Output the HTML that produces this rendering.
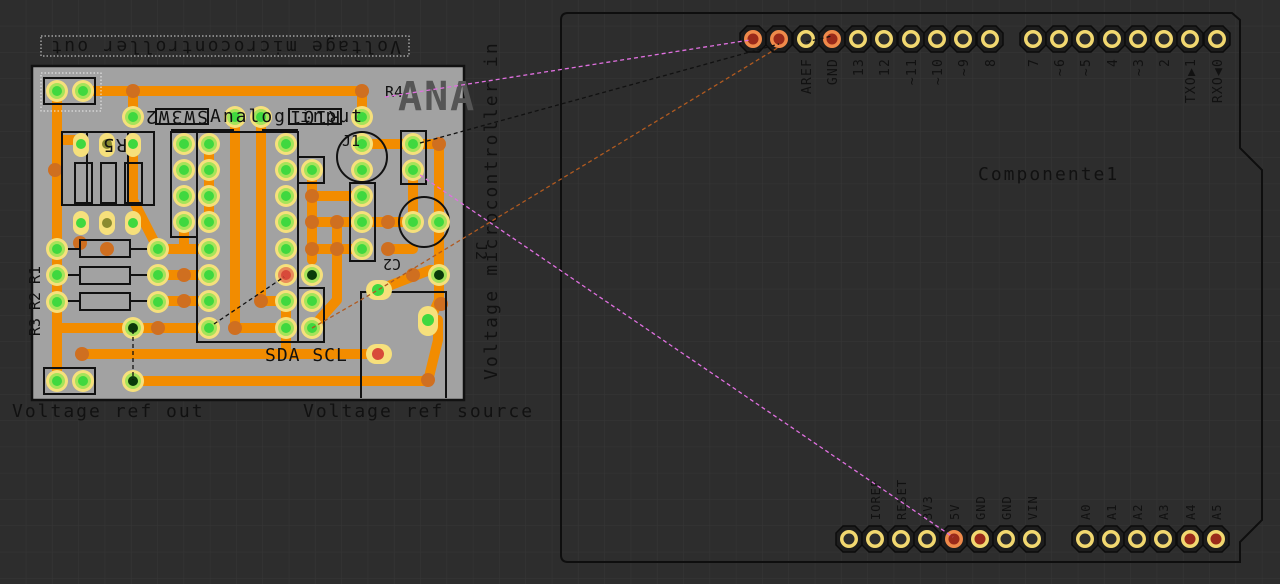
<!DOCTYPE html>
<html><head><meta charset="utf-8"><style>
html,body{margin:0;padding:0;background:#2d2d2d;width:1280px;height:584px;overflow:hidden}
svg{display:block}
text{font-family:"DejaVu Sans Mono","Liberation Mono",monospace}
</style></head><body>
<svg width="1280" height="584" viewBox="0 0 1280 584" xmlns="http://www.w3.org/2000/svg">
<defs>
<pattern id="g" width="26.3" height="26.3" patternUnits="userSpaceOnUse" x="0" y="0">
<path d="M26.3 0V26.3H0" fill="none" stroke="#363636" stroke-width="1"/>
</pattern>
<g id="p"><circle r="11" fill="#f6e07c"/><circle r="8" fill="#a6e35a"/><circle r="5" fill="#3fd83f"/></g>
<g id="pd"><circle r="11" fill="#f6e07c"/><circle r="8" fill="#a6e35a"/><circle r="5" fill="#0a3a0a"/></g>
<g id="pr"><circle r="11" fill="#f6e07c"/><circle r="8" fill="#e88a5a"/><circle r="5" fill="#d84a3a"/></g>
<g id="h"><polygon points="-6,-13 6,-13 13,-6 13,6 6,13 -6,13 -13,6 -13,-6" fill="#1d1d1d" stroke="#0c0c0c" stroke-width="1.5"/><circle r="9" fill="#f2d870"/><circle r="5.5" fill="#2d2d2d"/></g>
<g id="hr"><polygon points="-6,-13 6,-13 13,-6 13,6 6,13 -6,13 -13,6 -13,-6" fill="#1d1d1d" stroke="#0c0c0c" stroke-width="1.5"/><circle r="9" fill="#f08a4a"/><circle r="5.5" fill="#9a2a1a"/></g>
<g id="hc"><polygon points="-6,-13 6,-13 13,-6 13,6 6,13 -6,13 -13,6 -13,-6" fill="#1d1d1d" stroke="#0c0c0c" stroke-width="1.5"/><circle r="9" fill="#f2d870"/><circle r="5.5" fill="#9a2a1a"/></g>
</defs>
<rect width="1280" height="584" fill="url(#g)"/>

<path d="M568 13 H1232 L1240 20 V148 L1262 170 V520 L1240 542 V562 H568 Q561 562 561 555 V20 Q561 13 568 13 Z" fill="none" stroke="#0e0e0e" stroke-width="2"/>
<text x="978" y="180" font-size="18" letter-spacing="2" fill="#111">Componente1</text>

<use href="#hr" x="753" y="39"/><use href="#hr" x="779" y="39"/><use href="#h" x="806" y="39"/><use href="#hr" x="832" y="39"/>
<use href="#h" x="858" y="39"/><use href="#h" x="884" y="39"/><use href="#h" x="911" y="39"/><use href="#h" x="937" y="39"/><use href="#h" x="963" y="39"/><use href="#h" x="990" y="39"/>
<use href="#h" x="1033" y="39"/><use href="#h" x="1059" y="39"/><use href="#h" x="1085" y="39"/><use href="#h" x="1112" y="39"/><use href="#h" x="1138" y="39"/><use href="#h" x="1164" y="39"/><use href="#h" x="1190" y="39"/><use href="#h" x="1217" y="39"/>
<g font-size="13" letter-spacing="1.2" fill="#111" text-anchor="end">
<text transform="translate(811,58) rotate(-90)">AREF</text>
<text transform="translate(837,58) rotate(-90)">GND</text>
<text transform="translate(863,58) rotate(-90)">13</text>
<text transform="translate(889,58) rotate(-90)">12</text>
<text transform="translate(916,58) rotate(-90)">~11</text>
<text transform="translate(942,58) rotate(-90)">~10</text>
<text transform="translate(968,58) rotate(-90)">~9</text>
<text transform="translate(995,58) rotate(-90)">8</text>
<text transform="translate(1038,58) rotate(-90)">7</text>
<text transform="translate(1064,58) rotate(-90)">~6</text>
<text transform="translate(1090,58) rotate(-90)">~5</text>
<text transform="translate(1117,58) rotate(-90)">4</text>
<text transform="translate(1143,58) rotate(-90)">~3</text>
<text transform="translate(1169,58) rotate(-90)">2</text>
<text transform="translate(1195,58) rotate(-90)">TXO▶1</text>
<text transform="translate(1222,58) rotate(-90)">RXO◀0</text>
</g>

<use href="#h" x="849" y="539"/><use href="#h" x="875" y="539"/><use href="#h" x="901" y="539"/><use href="#h" x="927" y="539"/><use href="#hr" x="954" y="539"/><use href="#hc" x="980" y="539"/><use href="#h" x="1006" y="539"/><use href="#h" x="1032" y="539"/>
<use href="#h" x="1085" y="539"/><use href="#h" x="1111" y="539"/><use href="#h" x="1137" y="539"/><use href="#h" x="1163" y="539"/><use href="#hc" x="1190" y="539"/><use href="#hc" x="1216" y="539"/>
<g font-size="12" letter-spacing="1" fill="#111">
<text transform="translate(880,520) rotate(-90)">IOREF</text>
<text transform="translate(906,520) rotate(-90)">RESET</text>
<text transform="translate(932,520) rotate(-90)">3V3</text>
<text transform="translate(959,520) rotate(-90)">5V</text>
<text transform="translate(985,520) rotate(-90)">GND</text>
<text transform="translate(1011,520) rotate(-90)">GND</text>
<text transform="translate(1037,520) rotate(-90)">VIN</text>
<text transform="translate(1090,520) rotate(-90)">A0</text>
<text transform="translate(1116,520) rotate(-90)">A1</text>
<text transform="translate(1142,520) rotate(-90)">A2</text>
<text transform="translate(1168,520) rotate(-90)">A3</text>
<text transform="translate(1195,520) rotate(-90)">A4</text>
<text transform="translate(1221,520) rotate(-90)">A5</text>
</g>

<rect x="32" y="66" width="432" height="334" fill="#a2a2a2" stroke="#111" stroke-width="2.5"/>
<rect x="41" y="36" width="368" height="20" fill="none" stroke="#ddd" stroke-width="1" stroke-dasharray="1.5 2"/>
<text x="225" y="53" font-size="18" letter-spacing="2.2" fill="#111" text-anchor="middle" transform="rotate(180 225 47)">Voltage microcontroller out</text>
<text x="398" y="110" font-size="40" fill="#555" font-family="Liberation Sans,sans-serif" font-weight="bold" letter-spacing="2">ANA</text>

<g stroke="#f28c00" stroke-width="10" fill="none" stroke-linecap="round" stroke-linejoin="round">
<path d="M83 91 H362 V117"/>
<path d="M133 91 V117"/>
<path d="M57 91 V381"/>
<path d="M57 328 H209"/>
<path d="M83 354 H378"/>
<path d="M133 381 H428 L438 340 V320"/>
<path d="M158 249 H209 M158 275 H209 M158 301 H209"/>
<path d="M57 249 V302"/>
<path d="M235 117 V328 H286"/>
<path d="M261 117 V301 H286"/>
<path d="M362 144 H439 V300 L430 320"/>
<path d="M312 170 V260 M312 196 H362 M312 222 H413 M312 249 H362"/>
<path d="M337 222 V300 L312 328"/>
<path d="M378 290 L430 270 H439"/>
<path d="M413 170 V222 M387 249 H413"/>
<path d="M209 144 V222 M184 222 V249"/>
<path d="M133 144 L133 200 L158 249"/>
<path d="M286 301 V354"/>
<path d="M57 140 H83"/>
</g>
<g fill="#cf6f20">
<circle cx="133" cy="91" r="7"/><circle cx="362" cy="91" r="7"/><circle cx="55" cy="170" r="7"/>
<circle cx="107" cy="249" r="7"/><circle cx="184" cy="275" r="7"/><circle cx="184" cy="301" r="7"/><circle cx="158" cy="328" r="7"/>
<circle cx="82" cy="354" r="7"/><circle cx="235" cy="328" r="7"/><circle cx="261" cy="301" r="7"/>
<circle cx="312" cy="196" r="7"/><circle cx="312" cy="222" r="7"/><circle cx="337" cy="222" r="7"/><circle cx="312" cy="249" r="7"/><circle cx="337" cy="249" r="7"/>
<circle cx="388" cy="222" r="7"/><circle cx="388" cy="249" r="7"/><circle cx="413" cy="275" r="7"/><circle cx="439" cy="144" r="7"/>
<circle cx="441" cy="304" r="7"/><circle cx="428" cy="380" r="7"/><circle cx="80" cy="243" r="7"/>
</g>

<g stroke="#111" stroke-width="2" fill="none">
<rect x="44" y="78" width="51" height="26"/>
<rect x="44" y="368" width="51" height="26"/>
<rect x="62" y="132" width="92" height="73"/>
<line x1="87" y1="132" x2="87" y2="205"/><line x1="128" y1="132" x2="128" y2="205"/>
<rect x="75" y="163" width="17" height="40"/><rect x="101" y="163" width="15" height="40"/><rect x="125" y="163" width="17" height="40"/>
<rect x="80" y="240" width="50" height="17"/><rect x="80" y="267" width="50" height="17"/><rect x="80" y="293" width="50" height="17"/>
<path d="M67 249 H80 M130 249 H148 M67 275 H80 M130 275 H148 M67 301 H80 M130 301 H148"/>
<rect x="156" y="109" width="52" height="15"/>
<rect x="289" y="109" width="52" height="15"/>
<rect x="171" y="132" width="26" height="105"/>
<rect x="197" y="132" width="101" height="210"/>
<line x1="171" y1="130" x2="234" y2="130"/><line x1="262" y1="130" x2="298" y2="130"/>
<rect x="298" y="157" width="26" height="26"/>
<rect x="298" y="288" width="26" height="54"/>
<circle cx="362" cy="157" r="25"/>
<rect x="350" y="183" width="25" height="78"/>
<rect x="401" y="131" width="25" height="53"/>
<circle cx="424" cy="222" r="25"/>
<path d="M361 398 V292 H446 V398"/>
</g>
<rect x="41" y="73" width="60" height="38" fill="none" stroke="#eee" stroke-width="1" stroke-dasharray="1.5 2"/>

<use href="#p" x="57" y="91"/><use href="#p" x="83" y="91"/>
<use href="#p" x="133" y="117"/><use href="#p" x="235" y="117"/><use href="#p" x="261" y="117"/><use href="#p" x="362" y="117"/>
<g fill="#f6e07c"><rect x="73" y="133" width="16" height="24" rx="8"/><rect x="99" y="133" width="16" height="24" rx="8"/><rect x="125" y="133" width="16" height="24" rx="8"/>
<rect x="73" y="211" width="16" height="24" rx="8"/><rect x="99" y="211" width="16" height="24" rx="8"/><rect x="125" y="211" width="16" height="24" rx="8"/>
<rect x="366" y="280" width="26" height="20" rx="10"/><rect x="418" y="306" width="20" height="30" rx="10"/><rect x="366" y="344" width="26" height="20" rx="10"/></g>
<g fill="#3fd83f"><circle cx="81" cy="144" r="5"/><circle cx="133" cy="144" r="5"/><circle cx="81" cy="223" r="5"/><circle cx="133" cy="223" r="5"/><circle cx="378" cy="290" r="6"/><circle cx="428" cy="320" r="6"/></g>
<g fill="#8a8a30"><circle cx="107" cy="144" r="5"/><circle cx="107" cy="223" r="5"/></g>
<circle cx="378" cy="354" r="6" fill="#d84a3a"/>
<use href="#p" x="57" y="249"/><use href="#p" x="57" y="275"/><use href="#p" x="57" y="302"/>
<use href="#p" x="158" y="249"/><use href="#p" x="158" y="275"/><use href="#p" x="158" y="302"/>
<use href="#pd" x="133" y="328"/><use href="#pd" x="133" y="381"/>
<use href="#p" x="57" y="381"/><use href="#p" x="83" y="381"/>
<use href="#p" x="184" y="144"/><use href="#p" x="184" y="170"/><use href="#p" x="184" y="196"/><use href="#p" x="184" y="222"/>
<use href="#p" x="209" y="144"/><use href="#p" x="209" y="170"/><use href="#p" x="209" y="196"/><use href="#p" x="209" y="222"/><use href="#p" x="209" y="249"/><use href="#p" x="209" y="275"/><use href="#p" x="209" y="301"/><use href="#p" x="209" y="328"/>
<use href="#p" x="286" y="144"/><use href="#p" x="286" y="170"/><use href="#p" x="286" y="196"/><use href="#p" x="286" y="222"/><use href="#p" x="286" y="249"/><use href="#pr" x="286" y="275"/><use href="#p" x="286" y="301"/><use href="#p" x="286" y="328"/>
<use href="#p" x="312" y="170"/><use href="#pd" x="312" y="275"/><use href="#p" x="312" y="301"/><use href="#p" x="312" y="328"/>
<use href="#p" x="362" y="144"/><use href="#p" x="362" y="170"/><use href="#p" x="362" y="196"/><use href="#p" x="362" y="222"/><use href="#p" x="362" y="249"/>
<use href="#p" x="413" y="144"/><use href="#p" x="413" y="170"/>
<use href="#p" x="413" y="222"/><use href="#p" x="439" y="222"/><use href="#pd" x="439" y="275"/>

<g font-size="18" letter-spacing="2" fill="#111">
<text x="132" y="123" transform="rotate(180 170 117)">SW3W2</text>
<text x="210" y="122">Analog input</text>
<text x="300" y="123" transform="rotate(180 320 117)">R101</text>
<text x="385" y="97" font-size="15" letter-spacing="0">R4</text>
<text x="103" y="149" transform="rotate(180 115 144)">R5</text>
<text x="342" y="146" font-size="15" letter-spacing="0">J1</text>
<text x="265" y="361" letter-spacing="1">SDA SCL</text>
<text x="377" y="265" font-size="15" letter-spacing="0" transform="rotate(180 389 262)">C2</text>
<text x="28" y="280" font-size="15" letter-spacing="0" transform="rotate(-90 36 276)">R1</text>
<text x="28" y="306" font-size="15" letter-spacing="0" transform="rotate(-90 36 302)">R2</text>
<text x="28" y="332" font-size="15" letter-spacing="0" transform="rotate(-90 36 328)">R3</text>
<text x="460" y="266" font-size="15" letter-spacing="0" transform="rotate(90 480 262)">J2</text>
<text x="12" y="417">Voltage ref out</text>
<text x="303" y="417">Voltage ref source</text>
<text transform="translate(497,380) rotate(-90)" letter-spacing="2.2">Voltage microcontroller in</text>
</g>

<g fill="none" stroke-width="1.3" stroke-dasharray="4 3">
<path d="M385 97 L750 40" stroke="#e070e0"/>
<path d="M420 175 L953 537" stroke="#e070e0"/>
<path d="M420 143 L779 44" stroke="#111"/>
<path d="M312 328 L378 290 L779 47" stroke="#b05a20"/>
<path d="M214 324 L284 277" stroke="#111"/>
<path d="M133 330 V380" stroke="#111"/>
<path d="M806 42 L832 36" stroke="#111"/>
</g>
</svg>
</body></html>
